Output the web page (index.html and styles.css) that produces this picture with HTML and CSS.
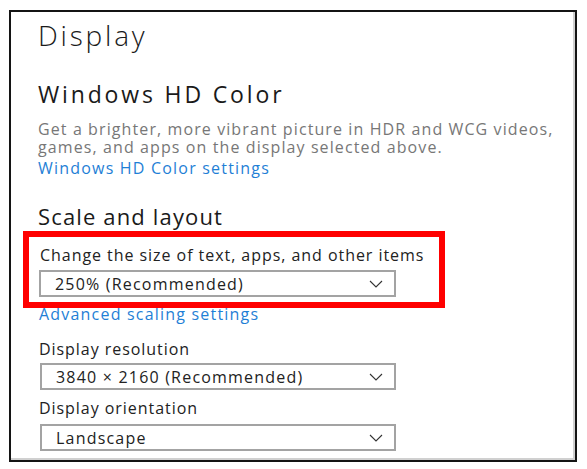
FILE: index.html
```html
<!DOCTYPE html>
<html lang="en">
<head>
<meta charset="utf-8">
<title>Display</title>
<link rel="stylesheet" href="styles.css">
</head>
<body>
<div class="frame">
  <h1 class="title">Display</h1>

  <h2 class="subtitle subtitle-hd">Windows HD Color</h2>
  <p class="desc">Get a brighter, more vibrant picture in HDR and WCG videos,<br>games, and apps on the display selected above.</p>
  <a class="link link-hd" href="#">Windows HD Color settings</a>

  <h2 class="subtitle subtitle-scale">Scale and layout</h2>
  <div class="highlight">
    <div class="label">Change the size of text, apps, and other items</div>
    <div class="select select-first">
      <span class="select-text">250% (Recommended)</span>
      <svg class="chev" width="14" height="8" viewBox="0 0 14 8"><path d="M1 1 L7 7 L13 1" fill="none" stroke="#333" stroke-width="1.1"/></svg>
    </div>
  </div>
  <a class="link link-adv" href="#">Advanced scaling settings</a>

  <div class="label label-res">Display resolution</div>
  <div class="select select-res">
    <span class="select-text">3840 × 2160 (Recommended)</span>
    <svg class="chev" width="14" height="8" viewBox="0 0 14 8"><path d="M1 1 L7 7 L13 1" fill="none" stroke="#333" stroke-width="1.1"/></svg>
  </div>

  <div class="label label-ori">Display orientation</div>
  <div class="select select-ori">
    <span class="select-text">Landscape</span>
    <svg class="chev" width="14" height="8" viewBox="0 0 14 8"><path d="M1 1 L7 7 L13 1" fill="none" stroke="#333" stroke-width="1.1"/></svg>
  </div>
</div>
</body>
</html>
```

FILE: styles.css
```css
* { box-sizing: border-box; }

html, body {
  margin: 0;
  padding: 0;
  background: #ffffff;
}

body {
  font-family: "Open Sans", "Liberation Sans", sans-serif;
  color: #1c1c1c;
  width: 587px;
  height: 469px;
  overflow: hidden;
}

.frame {
  margin: 10px 0 0 9px;
  width: 568px;
  height: 452px;
  border: 2px solid #141414;
  box-shadow: inset -2px -2px 0 #d0d0d0;
  padding: 5px 20px 0 27px;
  display: flex;
  flex-direction: column;
  align-items: flex-start;
}

.title {
  margin: 0;
  font-size: 28px;
  font-weight: 300;
  line-height: 36px;
  letter-spacing: 2.8px;
  color: #1a1a1a;
}

.subtitle {
  margin: 0;
  font-weight: 400;
  line-height: 28px;
  color: #1a1a1a;
  white-space: nowrap;
}

.subtitle-hd {
  margin-top: 27px;
  font-size: 23px;
  letter-spacing: 2.85px;
}

.subtitle-scale {
  margin-top: 25px;
  font-size: 22px;
  letter-spacing: 1.15px;
}

.desc {
  margin: 12px 0 0 0;
  font-size: 16px;
  line-height: 18px;
  letter-spacing: 1.1px;
  color: #777777;
  white-space: nowrap;
}

.link {
  display: block;
  font-size: 16px;
  line-height: 18px;
  letter-spacing: 1.2px;
  color: #1f7fd6;
  text-decoration: none;
  white-space: nowrap;
}

.link-hd { margin-top: 3px; }

.highlight {
  margin: 1px 0 0 -15px;
  width: 422px;
  border: 6px solid #ff0000;
  padding: 8px 0 5px 10px;
  display: flex;
  flex-direction: column;
  gap: 5px;
}

.label {
  font-size: 16px;
  line-height: 20px;
  letter-spacing: 0.95px;
  color: #222222;
  padding-left: 1px;
  white-space: nowrap;
}

.link-adv { margin-top: -3px; padding-left: 1px; }

.label-res { margin-top: 16px; }
.label-ori { margin-top: 8px; }

.select {
  width: 357px;
  height: 27px;
  border: 2px solid #a3a3a3;
  padding: 0 11px 0 14px;
  display: flex;
  align-items: center;
  justify-content: space-between;
  font-size: 16px;
  letter-spacing: 1.2px;
  color: #222222;
}

.select-first { margin-left: 0; }
.select-res { margin-top: 4px; margin-left: 2px; width: 356px; }
.select-ori { margin-top: 6px; margin-left: 2px; width: 356px; }

.select-text { line-height: 20px; white-space: nowrap; }

.chev { display: block; }
```
